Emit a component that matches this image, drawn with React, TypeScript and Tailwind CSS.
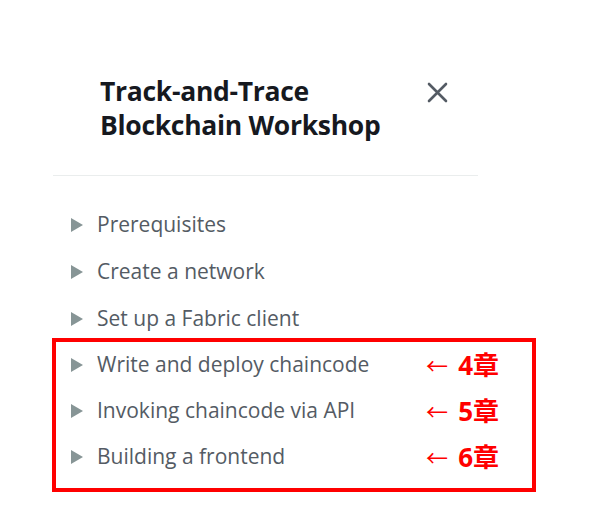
import React from "react";

const sections = [
  { title: "Prerequisites" },
  { title: "Create a network" },
  { title: "Set up a Fabric client" },
];

const chapters = [
  { title: "Write and deploy chaincode", note: "4章" },
  { title: "Invoking chaincode via API", note: "5章" },
  { title: "Building a frontend", note: "6章" },
];

function Caret() {
  return (
    <svg width="12" height="14" viewBox="0 0 12 14" className="shrink-0">
      <path d="M0 0 L12 7 L0 14 Z" fill="#879596" />
    </svg>
  );
}

function CloseIcon() {
  return (
    <svg width="21" height="21" viewBox="0 0 21 21">
      <path d="M2 2 L19 19 M19 2 L2 19" stroke="#545b64" strokeWidth="2.6" strokeLinecap="round" />
    </svg>
  );
}

function NavRow({ title, note }: { title: string; note?: string }) {
  return (
    <div className="flex items-center h-full">
      <Caret />
      <span className="ml-[14px] text-[21px] text-[#545b64]">{title}</span>
      {note && (
        <span className="ml-auto flex items-center text-[#ff0000] font-['Noto_Sans','Noto_Sans_CJK_JP',sans-serif]">
          <span className="text-[22px] leading-none">←</span>
          <span className="ml-[10px] text-[26px] font-bold leading-none">{note}</span>
        </span>
      )}
    </div>
  );
}

export default function App() {
  return (
    <div className="w-[600px] h-[521px] bg-white font-['Open_Sans',sans-serif] overflow-hidden">
      <div className="pt-[74px] pl-[53px] w-[478px]">
        <div className="flex items-start justify-between pl-[47px] pr-[30px]">
          <h1 className="text-[26.5px] leading-[34px] font-bold text-[#16191f] tracking-[-0.3px]">
            Track-and-Trace
            <br />
            Blockchain Workshop
          </h1>
          <button type="button" className="mt-[8px]">
            <CloseIcon />
          </button>
        </div>
        <div className="mt-[33px] h-px bg-[#eaeded]" />
      </div>

      <div className="mt-[25px] pl-[71px]">
        {sections.map((s) => (
          <div key={s.title} className="h-[47px]">
            <NavRow title={s.title} />
          </div>
        ))}
      </div>

      <div className="ml-[52px] -mt-[4px] w-[484px] border-4 border-[#ff0000] pl-[15px] pr-[33px] pb-[8px]">
        {chapters.map((c) => (
          <div key={c.title} className="h-[46px]">
            <NavRow title={c.title} note={c.note} />
          </div>
        ))}
      </div>
    </div>
  );
}
